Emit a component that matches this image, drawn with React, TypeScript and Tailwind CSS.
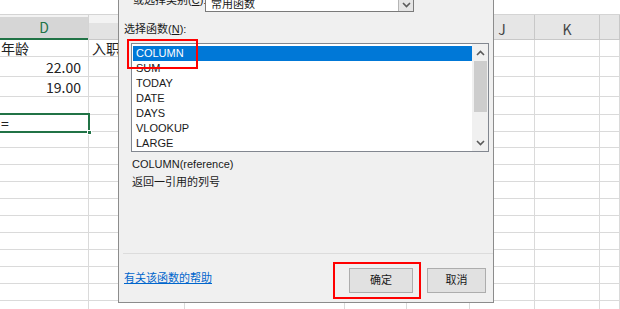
const cols = [
  { key: "D", w: 89, label: "D", active: true },
  { key: "E", w: 96, label: "", active: false },
  { key: "F", w: 160, label: "", active: false },
  { key: "H", w: 62, label: "", active: false },
  { key: "I", w: 63, label: "", active: false },
  { key: "J", w: 65, label: "J", active: false },
  { key: "K", w: 65, label: "K", active: false },
  { key: "L", w: 20, label: "", active: false },
];

const rowHeights = [17, 20, 20, 18, 17, 16, 17, 17, 17, 17, 17, 17, 17, 17, 17, 17];

// content per row: [D, E]
const cells: Record<number, { d?: string; e?: string; right?: boolean }> = {
  0: { d: "年龄", e: "入职" },
  1: { d: "22.00", right: true },
  2: { d: "19.00", right: true },
  4: { d: "=" },
};

const functions = ["COLUMN", "SUM", "TODAY", "DATE", "DAYS", "VLOOKUP", "LARGE"];

const sheetFont = { fontFamily: '"Noto Sans CJK SC", "Liberation Sans", sans-serif' };
const dlgFont = { fontFamily: '"Liberation Sans", "Noto Sans CJK SC", sans-serif' };

const Chevron = ({ up }: { up?: boolean }) => (
  <svg width="9" height="6" viewBox="0 0 9 6">
    <polyline
      points={up ? "1,5 4.5,1.5 8,5" : "1,1 4.5,4.5 8,1"}
      fill="none"
      stroke="#5a5a5a"
      strokeWidth="1.6"
    />
  </svg>
);

const Sheet = () => (
  <div className="absolute inset-0 bg-white" style={sheetFont}>
    {/* formula bar area */}
    <div className="h-[15px] border-b border-[#d4d4d4] bg-white" />

    {/* column headers */}
    <div className="flex h-[25px]">
      {cols.map((c, i) => (
        <div
          key={c.key}
          style={{ width: c.w }}
          className={
            i < 2
              ? "shrink-0 flex flex-col bg-[#f3f3f3] border-r border-[#d4d4d4]"
              : "shrink-0 flex items-end justify-center pb-[1px] bg-[#e6e6e6] border-r border-[#c8c8c8] border-b border-[#c8c8c8] text-[14px] leading-[18px] text-[#444]"
          }
        >
          {i < 2 ? (
            <>
              <div className="h-[8px]" />
              <div
                className={
                  c.active
                    ? "flex-1 flex items-center justify-center bg-[#d6d6d6] border-b-2 border-[#217346] text-[14px] text-[#217346]"
                    : "flex-1 bg-[#e3e3e3] border-b border-[#c8c8c8]"
                }
              >
                {c.label}
              </div>
            </>
          ) : (
            c.label
          )}
        </div>
      ))}
    </div>

    {/* rows */}
    {rowHeights.map((h, r) => (
      <div key={r} className="flex" style={{ height: h }}>
        {cols.map((c, i) => (
          <div
            key={c.key}
            style={{ width: c.w }}
            className={
              "shrink-0 border-r border-b border-[#dadada] text-[14px] text-[#222] leading-none flex items-center overflow-hidden whitespace-nowrap " +
              (i === 0 && cells[r]?.right ? "justify-end pr-[7px]" : "pl-[1px]")
            }
          >
            {i === 0 ? cells[r]?.d : i === 1 ? <span className="pl-[2px]">{cells[r]?.e}</span> : null}
          </div>
        ))}
      </div>
    ))}

    {/* active cell */}
    <div className="absolute left-[-3px] top-[113px] w-[93px] h-[20px] border-2 border-[#217346]">
      <div className="absolute right-[-4px] bottom-[-4px] w-[5px] h-[5px] bg-[#217346] border border-white" />
    </div>
  </div>
);

const Dialog = () => (
  <div
    className="absolute left-[118px] top-[-20px] w-[376px] h-[323px] bg-[#f0f0f0] border border-[#8c8c8c] flex flex-col text-[11px] text-[#1a1a1a]"
    style={dlgFont}
  >
    {/* category row */}
    <div className="mt-[11px] h-[20px] flex items-center">
      <span className="ml-[14px] w-[72px] mb-[4px] whitespace-nowrap">
        或选择类别(<span className="underline">C</span>):
      </span>
      <div className="ml-[0px] w-[209px] h-[20px] bg-white border border-[#7a7a7a] flex">
        <span className="flex-1 pl-[5px] mt-[3px]">常用函数</span>
        <div className="w-[15px] h-full bg-[#e5e5e5] border-l border-[#b5b5b5] flex justify-center items-end pb-[3px]">
          <Chevron />
        </div>
      </div>
    </div>

    {/* label */}
    <div className="mt-[10px] ml-[5px] h-[14px] leading-[14px]">
      选择函数(<span className="underline">N</span>):
    </div>

    {/* listbox */}
    <div className="mt-[7px] ml-[12px] w-[358px] h-[109px] bg-white border border-[#828790] flex">
      <div className="flex-1 pt-[2px] pl-[1px]">
        {functions.map((f, i) => (
          <div
            key={f}
            className={
              "h-[15px] leading-[15px] pl-[3px] " + (i === 0 ? "bg-[#0078d7] text-white" : "text-[#1a1a1a]")
            }
          >
            {f}
          </div>
        ))}
      </div>
      <div className="w-[16px] bg-[#f0f0f0] flex flex-col items-center">
        <div className="h-[17px] flex items-center justify-center">
          <Chevron up />
        </div>
        <div className="w-[13px] h-[51px] bg-[#cdcdcd]" />
        <div className="flex-1" />
        <div className="h-[17px] flex items-center justify-center">
          <Chevron />
        </div>
      </div>
    </div>

    {/* description */}
    <div className="mt-[5px] ml-[13px] h-[14px] leading-[14px]">COLUMN(reference)</div>
    <div className="mt-[4px] ml-[13px] h-[14px] leading-[14px]">返回一引用的列号</div>

    {/* separator */}
    <div className="mt-[64px] ml-[4px] h-[1px] bg-[#dcdcdc]" />

    {/* footer */}
    <div className="mt-[14px] flex items-center">
      <a className="ml-[5px] mb-[4px] text-[#0066cc] underline">有关该函数的帮助</a>
      <div className="flex-1" />
      <button className="w-[64px] h-[25px] bg-[#e1e1e1] border border-[#adadad]">确定</button>
      <button className="ml-[14px] mr-[7px] w-[59px] h-[25px] bg-[#e1e1e1] border border-[#adadad]">
        取消
      </button>
    </div>
  </div>
);

export default function App() {
  return (
    <div className="relative w-[620px] h-[309px] overflow-hidden bg-white">
      <Sheet />
      <Dialog />
      {/* red annotation boxes */}
      <div className="absolute left-[127px] top-[39px] w-[71px] h-[30px] border-2 border-[#ff0000]" />
      <div className="absolute left-[333px] top-[262px] w-[88px] h-[37px] border-2 border-[#ff0000]" />
    </div>
  );
}
